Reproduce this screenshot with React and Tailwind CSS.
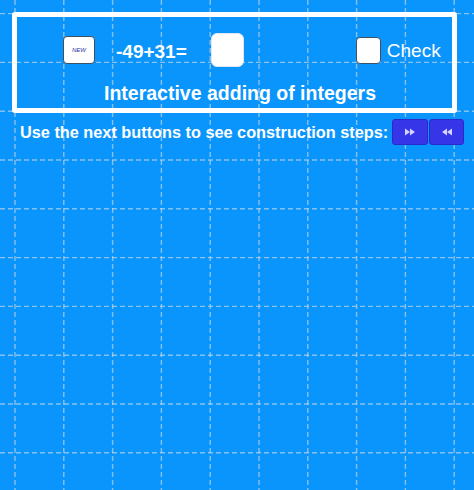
import React from "react";

function Grid() {
  const xs = [];
  const ys = [];
  for (let i = 0; i < 10; i++) xs.push(15 + i * 48.8);
  for (let i = 0; i < 10; i++) ys.push(13.6 + i * 48.8);
  return (
    <svg className="absolute inset-0" width="474" height="490" viewBox="0 0 474 490">
      {ys.map((y) => (
        <line key={"h" + y} x1="0" x2="474" y1={y} y2={y} stroke="rgba(205,215,228,0.65)" strokeWidth="1.4" strokeDasharray="5 3" />
      ))}
      {xs.map((x) => (
        <line key={"v" + x} x1={x} x2={x} y1="0" y2="490" stroke="rgba(205,215,228,0.65)" strokeWidth="1.4" strokeDasharray="5 3" />
      ))}
    </svg>
  );
}

function FF({ left }) {
  return (
    <svg width="12" height="8" viewBox="0 0 12 8">
      {left ? (
        <g fill="#d4d4ff">
          <polygon points="6,0.5 6,7.5 1,4" />
          <polygon points="11,0.5 11,7.5 6,4" />
        </g>
      ) : (
        <g fill="#d4d4ff">
          <polygon points="1,0.5 1,7.5 6,4" />
          <polygon points="6,0.5 6,7.5 11,4" />
        </g>
      )}
    </svg>
  );
}

export default function App() {
  return (
    <div
      className="relative w-[474px] h-[490px] overflow-hidden bg-[#0a95fd] text-white"
      style={{ fontFamily: '"Liberation Sans", Arial, sans-serif' }}
    >
      <Grid />
      <div className="relative flex flex-col pt-[12px]">
        <div className="ml-[12px] w-[445px] h-[101px] border-[5px] border-white rounded-[3px] flex flex-col">
          <div className="flex items-center mt-[16px] h-[34px]">
            <div className="ml-[46px] w-[32px] h-[28px] bg-white rounded-[4px] border-[1.5px] border-[#3e5062] flex items-center justify-center">
              <span className="text-[6px] italic text-[#3030a8] leading-none">NEW</span>
            </div>
            <span className="ml-[21px] mt-[2px] text-[19px] font-bold leading-none">-49+31=</span>
            <div className="ml-[24px] w-[33px] h-[34px] bg-white rounded-[6px] border border-[#dfe6ee]" />
            <div className="ml-[112px] w-[25px] h-[27px] bg-white rounded-[4px] border-[1.5px] border-[#3e5062]" />
            <span className="ml-[6px] text-[19px] leading-none">Check</span>
          </div>
          <div className="mt-[14px] ml-[87px] text-[19.5px] font-bold leading-[24px]">
            Interactive adding of integers
          </div>
        </div>
        <div className="flex items-center mt-[6px] h-[26px]">
          <span className="ml-[20px] text-[16.3px] font-bold leading-none">
            Use the next buttons to see construction steps:
          </span>
          <div className="absolute left-[392px] flex gap-[1px]">
            <button className="w-[36px] h-[26px] bg-[#3636e8] border border-[#2a2acc] rounded-[3px] flex items-center justify-center">
              <FF />
            </button>
            <button className="w-[35px] h-[26px] bg-[#3636e8] border border-[#2a2acc] rounded-[3px] flex items-center justify-center">
              <FF left />
            </button>
          </div>
        </div>
      </div>
    </div>
  );
}
